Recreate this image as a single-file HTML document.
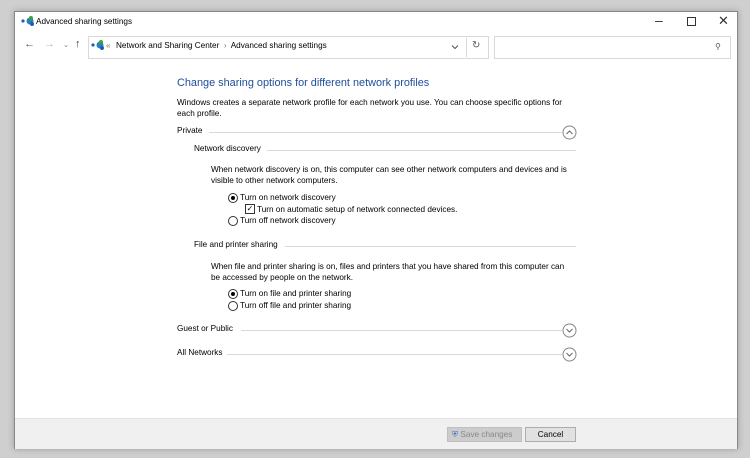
<!DOCTYPE html><html><head><style>
body{margin:0;width:750px;height:458px;background:#cfcfcf;font-family:"Liberation Sans",sans-serif;font-size:8.2px;color:#000;position:relative;overflow:hidden}
.w{position:absolute;left:14px;top:11px;width:722px;height:436px;background:#fff;border:1px solid #888;box-shadow:0 0 6px rgba(0,0,0,.25)}
.a{position:absolute;white-space:nowrap}
.ln{position:absolute;height:1px;background:#d8d8d8}
.rd{position:absolute;width:8px;height:8px;border:1px solid #333;border-radius:50%;background:#fff}
.rd.on:after{content:"";position:absolute;left:2px;top:2px;width:4px;height:4px;border-radius:50%;background:#000}
</style></head><body>
<div class="w">
<svg class="a" style="left:6px;top:4px" width="14" height="10"><circle cx="2" cy="5" r="1.6" fill="#1a5fb4"/><circle cx="9" cy="5" r="3.5" fill="#2a7fc0"/><circle cx="10" cy="2" r="2" fill="#3aa537"/><circle cx="11" cy="8" r="2" fill="#1a5fb4"/></svg>
<div class="a" style="left:21px;top:5px">Advanced sharing settings</div>
<div class="a" style="left:640px;top:0px;font-size:14px;color:#333">–</div>
<div class="a" style="left:672px;top:5px;width:7px;height:7px;border:1px solid #333"></div>
<div class="a" style="left:703px;top:1px;font-size:13px;color:#333">✕</div>
<div class="a" style="left:9px;top:26px;font-size:11px;color:#555">←</div>
<div class="a" style="left:29px;top:26px;font-size:11px;color:#bbb">→</div>
<div class="a" style="left:48px;top:29px;font-size:7px;color:#777">⌄</div>
<div class="a" style="left:60px;top:26px;font-size:11px;color:#444">↑</div>
<div class="a" style="left:73px;top:24px;width:399px;height:21px;border:1px solid #d9d9d9"></div>
<svg class="a" style="left:76px;top:28px" width="14" height="10"><circle cx="2" cy="5" r="1.6" fill="#1a5fb4"/><circle cx="9" cy="5" r="3.5" fill="#2a7fc0"/><circle cx="10" cy="2" r="2" fill="#3aa537"/><circle cx="11" cy="8" r="2" fill="#1a5fb4"/></svg>
<div class="a" style="left:91px;top:29px;color:#777">«</div>
<div class="a" style="left:101px;top:29px">Network and Sharing Center &nbsp;<span style="color:#777">›</span>&nbsp; Advanced sharing settings</div>
<div class="a" style="left:451px;top:26px;width:1px;height:19px;background:#d9d9d9"></div>
<svg class="a" style="left:436px;top:32px" width="8" height="6"><path d="M1 1.5L4 4.5L7 1.5" stroke="#555" fill="none"/></svg>
<div class="a" style="left:457px;top:28px;font-size:10px;color:#555">↻</div>
<div class="a" style="left:479px;top:24px;width:235px;height:21px;border:1px solid #d9d9d9"></div>
<div class="a" style="left:700px;top:29px;color:#555">⚲</div>
<div class="a" style="left:162px;top:65px;font-size:10.9px;color:#1e4e9a">Change sharing options for different network profiles</div>
<div class="a" style="left:162px;top:85px;line-height:11px">Windows creates a separate network profile for each network you use. You can choose specific options for<br>each profile.</div>
<div class="a" style="left:162px;top:114px">Private</div><div class="ln" style="left:194px;top:120px;width:353px"></div>
<svg class="a" style="left:547px;top:113px" width="15" height="15"><circle cx="7.5" cy="7.5" r="6.5" stroke="#888" fill="none"/><path d="M4.5 9L7.5 6L10.5 9" stroke="#666" fill="none"/></svg>
<div class="a" style="left:179px;top:132px">Network discovery</div><div class="ln" style="left:252px;top:138px;width:309px"></div>
<div class="a" style="left:196px;top:152px;line-height:11px">When network discovery is on, this computer can see other network computers and devices and is<br>visible to other network computers.</div>
<div class="rd on" style="left:213px;top:181px"></div><div class="a" style="left:225px;top:181px">Turn on network discovery</div>
<div class="a" style="left:230px;top:192px;width:8px;height:8px;border:1px solid #333;font-size:8px;line-height:8px;text-align:center">✓</div><div class="a" style="left:242px;top:193px">Turn on automatic setup of network connected devices.</div>
<div class="rd" style="left:213px;top:204px"></div><div class="a" style="left:225px;top:204px">Turn off network discovery</div>
<div class="a" style="left:179px;top:228px">File and printer sharing</div><div class="ln" style="left:270px;top:234px;width:291px"></div>
<div class="a" style="left:196px;top:249px;line-height:11px">When file and printer sharing is on, files and printers that you have shared from this computer can<br>be accessed by people on the network.</div>
<div class="rd on" style="left:213px;top:277px"></div><div class="a" style="left:225px;top:277px">Turn on file and printer sharing</div>
<div class="rd" style="left:213px;top:289px"></div><div class="a" style="left:225px;top:289px">Turn off file and printer sharing</div>
<div class="a" style="left:162px;top:312px">Guest or Public</div><div class="ln" style="left:226px;top:318px;width:321px"></div>
<svg class="a" style="left:547px;top:311px" width="15" height="15"><circle cx="7.5" cy="7.5" r="6.5" stroke="#888" fill="none"/><path d="M4.5 6L7.5 9L10.5 6" stroke="#666" fill="none"/></svg>
<div class="a" style="left:162px;top:336px">All Networks</div><div class="ln" style="left:212px;top:342px;width:335px"></div>
<svg class="a" style="left:547px;top:335px" width="15" height="15"><circle cx="7.5" cy="7.5" r="6.5" stroke="#888" fill="none"/><path d="M4.5 6L7.5 9L10.5 6" stroke="#666" fill="none"/></svg>
<div class="a" style="left:0;top:406px;width:722px;height:30px;background:#f0f0f0;border-top:1px solid #e3e3e3"></div>
<div class="a" style="left:432px;top:415px;width:73px;height:13px;background:#ccc;border:1px solid #bfbfbf;color:#888;line-height:13px"><span style="color:#3a75c4;margin-left:4px">⛨</span> Save changes</div>
<div class="a" style="left:510px;top:415px;width:49px;height:13px;background:#e1e1e1;border:1px solid #adadad;text-align:center;line-height:13px">Cancel</div>
</div>
</body></html>
